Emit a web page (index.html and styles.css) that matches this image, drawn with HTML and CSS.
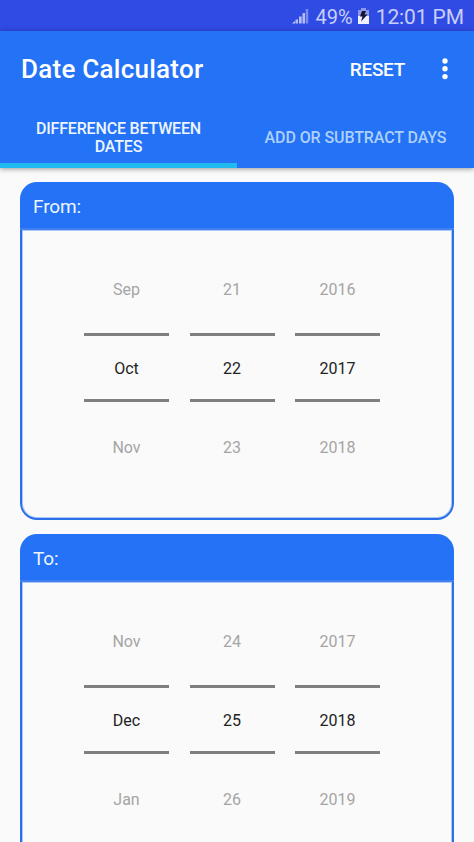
FILE: index.html
```
<!DOCTYPE html>
<html lang="en">
<head>
    <meta charset="utf-8">
    <title>Date Calculator</title>
    <link rel="stylesheet" href="styles.css">
</head>
<body>

<div class="status-bar">
    <svg class="signal" width="17" height="17" viewBox="0 0 17 17">
        <path d="M0 15.500 L3 13 V15.500 Z" fill="#c3cafa"/>
        <path d="M3.500 11.500 h2.500 v4 h-2.500 Z M7 8.500 h2.700 v7 h-2.700 Z M10.500 5 h2.500 v10.500 h-2.500 Z" fill="#b4bdf7"/>
        <path d="M13.700 1 h2.500 v14.500 h-2.500 Z" fill="#7d8cee"/>
    </svg>
    <span class="percent">49%</span>
    <svg class="battery" width="11" height="17" viewBox="0 0 11 17">
        <path d="M3 0 h5 v2 h3 v6 h-11 v-6 h3 Z" fill="#8b98e9"/>
        <path d="M0 8 h11 v8 h-11 Z" fill="#eef0ff"/>
        <path d="M4 3 H8 L6.500 6.500 H9.500 L3 13.500 L4.500 8.500 H2 Z" fill="#141432"/>
    </svg>
    <span class="clock">12:01 PM</span>
</div>

<div class="header">
    <div class="app-bar">
        <h1>Date Calculator</h1>
        <button class="reset">RESET</button>
        <svg class="more" width="6" height="22" viewBox="0 0 6 22">
            <circle cx="3" cy="3" r="2.700"/>
            <circle cx="3" cy="10.800" r="2.700"/>
            <circle cx="3" cy="18.600" r="2.700"/>
        </svg>
    </div>
    <div class="tabs">
        <div class="tab active"><span>DIFFERENCE BETWEEN<br>DATES</span></div>
        <div class="tab"><span>ADD OR SUBTRACT DAYS</span></div>
    </div>
</div>

<div class="content">
    <div class="card">
        <h2>From:</h2>
        <div class="picker">
            <div class="column">
                <span>Sep</span>
                <span class="selected">Oct</span>
                <span>Nov</span>
            </div>
            <div class="column">
                <span>21</span>
                <span class="selected">22</span>
                <span>23</span>
            </div>
            <div class="column">
                <span>2016</span>
                <span class="selected">2017</span>
                <span>2018</span>
            </div>
        </div>
    </div>

    <div class="card">
        <h2>To:</h2>
        <div class="picker">
            <div class="column">
                <span>Nov</span>
                <span class="selected">Dec</span>
                <span>Jan</span>
            </div>
            <div class="column">
                <span>24</span>
                <span class="selected">25</span>
                <span>26</span>
            </div>
            <div class="column">
                <span>2017</span>
                <span class="selected">2018</span>
                <span>2019</span>
            </div>
        </div>
    </div>
</div>

</body>
</html>
```
FILE: styles.css
```
* {
    box-sizing: border-box;
}
body {
    font-family: Roboto, "Liberation Sans", sans-serif;
    margin: 0;
    height: 842px;
    overflow: hidden;
    background-color: #fafafa;
}
.status-bar {
    display: flex;
    align-items: center;
    justify-content: flex-end;
    height: 31px;
    padding: 2px 10px 0 0;
    background: #304be3;
    color: #c8cffb;
    font-size: 21px;
}
.signal {
    margin-right: 7px;
}
.percent {
    font-size: 20px;
}
.battery {
    margin: 0 7px 0 5px;
}
.clock {
    letter-spacing: -0.1px;
}
.header {
    height: 137px;
    background: #2472f6;
    color: white;
    box-shadow: 0 1px 5px rgba(0,0,0,0.4);
}
.app-bar {
    display: flex;
    align-items: center;
    height: 76px;
    padding: 0 26px 0 21px;
}
h1 {
    flex: 1;
    margin: 0;
    font-size: 26px;
    font-weight: 500;
    letter-spacing: 0.25px;
}
.reset {
    padding: 0;
    border: none;
    background: none;
    color: white;
    font-family: inherit;
    font-size: 19px;
    font-weight: 500;
    letter-spacing: -0.3px;
}
.more {
    margin-left: 37px;
    fill: white;
}
.tabs {
    display: flex;
    height: 61px;
}
.tab {
    display: flex;
    align-items: center;
    justify-content: center;
    width: 237px;
    color: #add0fc;
    font-size: 16px;
    font-weight: 500;
    letter-spacing: -0.1px;
    line-height: 18px;
    text-align: center;
}
.tab.active {
    padding-top: 5px;
    border-bottom: 5px solid #20b9f0;
    color: #edf5ff;
    letter-spacing: -0.18px;
}
.content {
    display: flex;
    flex-direction: column;
    gap: 14px;
    height: 674px;
    padding: 14px 20px;
    overflow: hidden;
}
.card {
    flex: none;
    height: 338px;
}
h2 {
    height: 48px;
    margin: 0;
    padding-left: 13px;
    border-bottom: 2px solid #4080f1;
    border-radius: 17px 17px 0 0;
    background: #2472f6;
    color: #edf5ff;
    font-size: 19px;
    font-weight: 400;
    letter-spacing: -0.1px;
    line-height: 49px;
}
.picker {
    display: flex;
    justify-content: center;
    gap: 20.500px;
    height: 290px;
    padding: 27px 10px 0 0;
    border: 2px solid #2a6ee8;
    border-top: none;
    border-radius: 0 0 17px 17px;
    box-shadow: inset 0 0 0 1px #a9c7f8;
}
.column {
    display: flex;
    flex-direction: column;
    width: 85px;
    color: #a5a5a5;
    font-size: 16px;
    text-align: center;
}
.column span {
    height: 76px;
    line-height: 66px;
}
.column .selected {
    height: 69px;
    border-top: 3px solid #7f7f7f;
    border-bottom: 3px solid #7f7f7f;
    color: #222;
    line-height: 65px;
}
.column span:last-child {
    line-height: 92px;
}
```
